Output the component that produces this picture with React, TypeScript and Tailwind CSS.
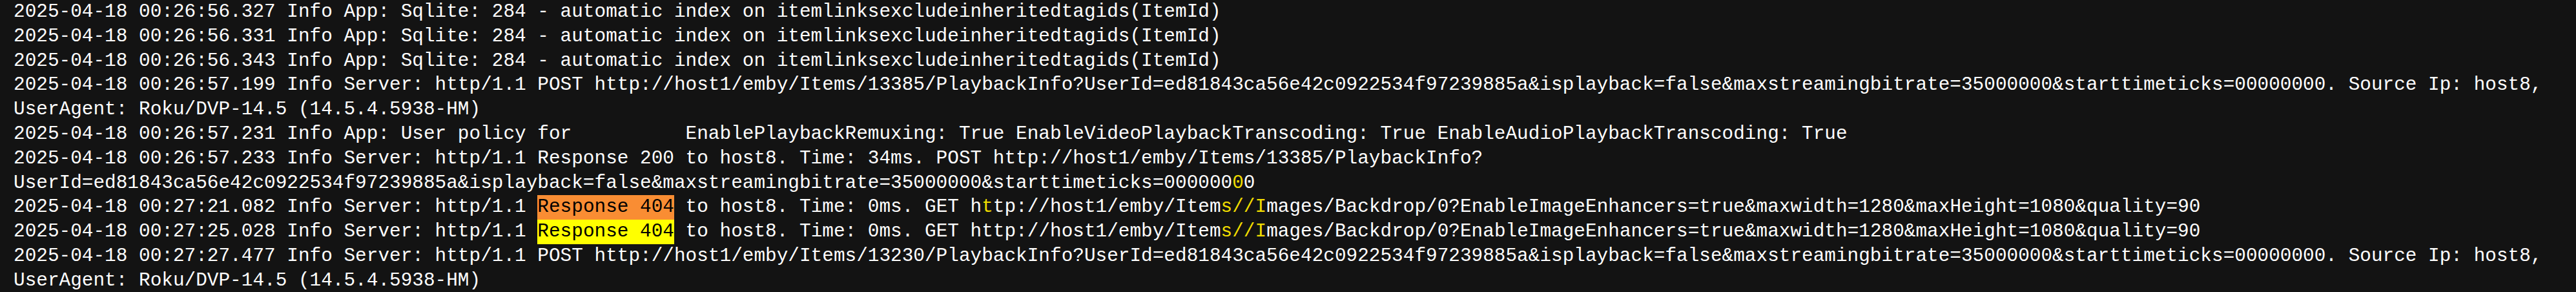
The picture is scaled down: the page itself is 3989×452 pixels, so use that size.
type Seg = { text: string; kind?: "orange" | "yellow" | "mark" };

const L = (text: string): Seg[] => [{ text }];

const lines: Seg[][] = [
  L("2025-04-18 00:26:56.327 Info App: Sqlite: 284 - automatic index on itemlinksexcludeinheritedtagids(ItemId)"),
  L("2025-04-18 00:26:56.331 Info App: Sqlite: 284 - automatic index on itemlinksexcludeinheritedtagids(ItemId)"),
  L("2025-04-18 00:26:56.343 Info App: Sqlite: 284 - automatic index on itemlinksexcludeinheritedtagids(ItemId)"),
  L(
    "2025-04-18 00:26:57.199 Info Server: http/1.1 POST http://host1/emby/Items/13385/PlaybackInfo?UserId=ed81843ca56e42c0922534f97239885a&isplayback=false&maxstreamingbitrate=35000000&starttimeticks=00000000. Source Ip: host8,"
  ),
  L("UserAgent: Roku/DVP-14.5 (14.5.4.5938-HM)"),
  L(
    "2025-04-18 00:26:57.231 Info App: User policy for          EnablePlaybackRemuxing: True EnableVideoPlaybackTranscoding: True EnableAudioPlaybackTranscoding: True"
  ),
  L(
    "2025-04-18 00:26:57.233 Info Server: http/1.1 Response 200 to host8. Time: 34ms. POST http://host1/emby/Items/13385/PlaybackInfo?"
  ),
  [
    { text: "UserId=ed81843ca56e42c0922534f97239885a&isplayback=false&maxstreamingbitrate=35000000&starttimeticks=000000" },
    { text: "0", kind: "mark" },
    { text: "0" },
  ],
  [
    { text: "2025-04-18 00:27:21.082 Info Server: http/1.1 " },
    { text: "Response 404", kind: "orange" },
    { text: " to host8. Time: 0ms. GET h" },
    { text: "t", kind: "mark" },
    { text: "tp://host1/emby/Item" },
    { text: "s//I", kind: "mark" },
    { text: "mages/Backdrop/0?EnableImageEnhancers=true&maxwidth=1280&maxHeight=1080&quality=90" },
  ],
  [
    { text: "2025-04-18 00:27:25.028 Info Server: http/1.1 " },
    { text: "Response 404", kind: "yellow" },
    { text: " to host8. Time: 0ms. GET http://host1/emby/Item" },
    { text: "s//I", kind: "mark" },
    { text: "mages/Backdrop/0?EnableImageEnhancers=true&maxwidth=1280&maxHeight=1080&quality=90" },
  ],
  L(
    "2025-04-18 00:27:27.477 Info Server: http/1.1 POST http://host1/emby/Items/13230/PlaybackInfo?UserId=ed81843ca56e42c0922534f97239885a&isplayback=false&maxstreamingbitrate=35000000&starttimeticks=00000000. Source Ip: host8,"
  ),
  L("UserAgent: Roku/DVP-14.5 (14.5.4.5938-HM)"),
];

const segClass = (kind?: Seg["kind"]) => {
  if (kind === "orange") return "bg-[#f98d33] text-black";
  if (kind === "yellow") return "bg-[#ffff00] text-black";
  if (kind === "mark") return "text-[#f0dc00]";
  return "";
};

const App = () => {
  return (
    <div className="w-[3989px] h-[452px] overflow-hidden bg-[#131313] pl-[21px] text-white font-['Liberation_Mono',monospace] text-[29.4px] leading-[37.8px] whitespace-pre">
      {lines.map((line, i) => (
        <div key={i} className="flex h-[37.8px]">
          {line.map((seg, j) => (
            <span key={j} className={segClass(seg.kind)}>
              {seg.text}
            </span>
          ))}
        </div>
      ))}
    </div>
  );
};

export default App;
